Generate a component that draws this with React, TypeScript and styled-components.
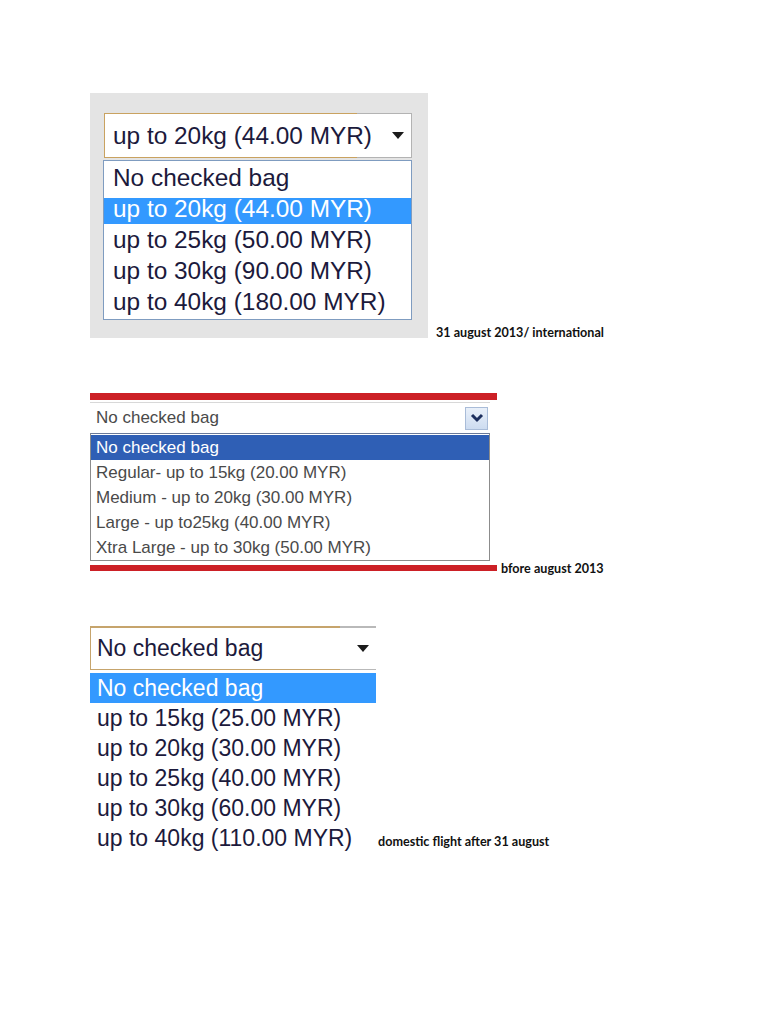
import React from "react";
import styled, { createGlobalStyle } from "styled-components";

const GlobalStyle = createGlobalStyle`
  html, body {
    margin: 0;
    padding: 0;
    background: #ffffff;
  }
`;

const intlOptions = [
  "No checked bag",
  "up to 20kg (44.00 MYR)",
  "up to 25kg (50.00 MYR)",
  "up to 30kg (90.00 MYR)",
  "up to 40kg (180.00 MYR)",
];

const oldOptions = [
  "No checked bag",
  "Regular- up to 15kg (20.00 MYR)",
  "Medium - up to 20kg (30.00 MYR)",
  "Large - up to25kg (40.00 MYR)",
  "Xtra Large - up to 30kg (50.00 MYR)",
];

const domesticOptions = [
  "No checked bag",
  "up to 15kg (25.00 MYR)",
  "up to 20kg (30.00 MYR)",
  "up to 25kg (40.00 MYR)",
  "up to 30kg (60.00 MYR)",
  "up to 40kg (110.00 MYR)",
];

const App = () => {
  return (
    <>
      <GlobalStyle />
      <Page>
        <Row>
          <GreyShot>
            <IntlSelect>
              <span>up to 20kg (44.00 MYR)</span>
              <Caret />
            </IntlSelect>
            <IntlList>
              {intlOptions.map((o, i) => (
                <IntlItem key={o} $active={i === 1}>
                  {o}
                </IntlItem>
              ))}
            </IntlList>
          </GreyShot>
          <Caption $gap={8} $drop={-2}>
            31 august 2013/ international
          </Caption>
        </Row>

        <Row>
          <RedShot>
            <OldSelect>
              <span>No checked bag</span>
              <OldButton>
                <svg width="14" height="10" viewBox="0 0 14 10">
                  <polyline
                    points="2,2 7,7 12,2"
                    fill="none"
                    stroke="#1d2f5e"
                    strokeWidth="3"
                  />
                </svg>
              </OldButton>
            </OldSelect>
            <OldList>
              {oldOptions.map((o, i) => (
                <OldItem key={o} $active={i === 0}>
                  {o}
                </OldItem>
              ))}
            </OldList>
          </RedShot>
          <Caption $gap={4} $drop={-5}>
            bfore august 2013
          </Caption>
        </Row>

        <Row>
          <PlainShot>
            <DomSelect>
              <span>No checked bag</span>
              <Caret $right={7} />
            </DomSelect>
            <DomList>
              {domesticOptions.map((o, i) => (
                <DomItem key={o} $active={i === 0}>
                  {o}
                </DomItem>
              ))}
            </DomList>
          </PlainShot>
          <Caption $gap={2} $drop={4}>
            domestic flight after 31 august
          </Caption>
        </Row>
      </Page>
    </>
  );
};

export default App;

const Page = styled.div`
  display: flex;
  flex-direction: column;
  gap: 55px;
  padding: 93px 0 0 90px;
  min-height: 1024px;
  box-sizing: border-box;
`;

const Row = styled.div`
  display: flex;
  align-items: flex-end;
`;

const Caption = styled.div<{ $gap: number; $drop: number }>`
  font-family: Lato, "Liberation Sans", sans-serif;
  font-weight: 700;
  font-size: 12.6px;
  line-height: 14px;
  color: #111;
  margin-left: ${(p) => p.$gap}px;
  margin-bottom: ${(p) => p.$drop}px;
  white-space: nowrap;
`;

const Caret = styled.i<{ $right?: number }>`
  display: block;
  width: 0;
  height: 0;
  border-left: 6px solid transparent;
  border-right: 6px solid transparent;
  border-top: 7px solid #1b1b1b;
  margin-right: ${(p) => p.$right ?? 7}px;
`;

/* first shot: grey framed screenshot */
const GreyShot = styled.div`
  width: 338px;
  height: 245px;
  box-sizing: border-box;
  background: #e4e4e4;
  padding: 20px 0 0 13px;
  display: flex;
  flex-direction: column;
  gap: 2px;
`;

const IntlSelect = styled.div`
  width: 308px;
  height: 45px;
  margin-left: 1px;
  box-sizing: border-box;
  background: #fff;
  border: 1px solid;
  border-image: linear-gradient(to right, #c9a260 82%, #b3b3b3 82%) 1;
  display: flex;
  align-items: center;
  justify-content: space-between;
  padding-left: 8px;
  font-family: "Liberation Sans", Arial, sans-serif;
  font-size: 24.4px;
  color: #1c1a3c;
`;

const IntlList = styled.div`
  width: 309px;
  height: 160px;
  box-sizing: border-box;
  background: #fff;
  border: 1px solid #7f9cc0;
  padding-top: 1px;
  display: flex;
  flex-direction: column;
`;

const IntlItem = styled.div<{ $active: boolean }>`
  height: 31px;
  line-height: 31px;
  padding-left: 9px;
  font-family: "Liberation Sans", Arial, sans-serif;
  font-size: 24.4px;
  color: ${(p) => (p.$active ? "#ffffff" : "#1c1a3c")};
  background: ${(p) =>
    p.$active ? "linear-gradient(transparent 5px, #3399ff 5px)" : "transparent"};
  white-space: nowrap;
`;

/* second shot: old style with red bars */
const RedShot = styled.div`
  width: 407px;
  box-sizing: border-box;
  border-top: 7px solid #cc2026;
  border-bottom: 6px solid #cc2026;
  padding: 2px 0 4px 0;
  display: flex;
  flex-direction: column;
`;

const OldSelect = styled.div`
  width: 400px;
  height: 31px;
  box-sizing: border-box;
  border-top: 1px solid #d8d8d8;
  display: flex;
  align-items: center;
  justify-content: space-between;
  padding-left: 6px;
  font-family: "Liberation Sans", Arial, sans-serif;
  font-size: 17px;
  color: #4a4a4a;
`;

const OldButton = styled.div`
  width: 23px;
  height: 23px;
  box-sizing: border-box;
  margin-right: 2px;
  background: linear-gradient(#e9f0fa, #cddcf0);
  border: 1px solid #a9bcd8;
  display: flex;
  align-items: center;
  justify-content: center;
`;

const OldList = styled.div`
  width: 400px;
  height: 128px;
  box-sizing: border-box;
  border: 1px solid #8c8c8c;
  border-top-color: #6a7a9a;
  padding-top: 1px;
  display: flex;
  flex-direction: column;
`;

const OldItem = styled.div<{ $active: boolean }>`
  height: 25.5px;
  line-height: 25px;
  padding-left: 5px;
  font-family: "Liberation Sans", Arial, sans-serif;
  font-size: 17px;
  color: ${(p) => (p.$active ? "#ffffff" : "#4a4a4a")};
  background: ${(p) => (p.$active ? "#2f5fb5" : "transparent")};
  white-space: nowrap;
`;

/* third shot: domestic, no frame */
const PlainShot = styled.div`
  width: 286px;
  display: flex;
  flex-direction: column;
  gap: 3px;
`;

const DomSelect = styled.div`
  width: 286px;
  height: 44px;
  box-sizing: border-box;
  border-style: solid;
  border-width: 2px 0 1px 1px;
  border-image: linear-gradient(to right, #c6a46c 87%, #b9b9b9 87%) 1;
  display: flex;
  align-items: center;
  justify-content: space-between;
  padding-left: 6px;
  font-family: "Liberation Sans", Arial, sans-serif;
  font-size: 23px;
  color: #1c1a3c;
`;

const DomList = styled.div`
  display: flex;
  flex-direction: column;
`;

const DomItem = styled.div<{ $active: boolean }>`
  height: 30px;
  line-height: 30px;
  padding-left: 7px;
  font-family: "Liberation Sans", Arial, sans-serif;
  font-size: 23px;
  color: ${(p) => (p.$active ? "#ffffff" : "#1c1a3c")};
  background: ${(p) => (p.$active ? "#3399ff" : "transparent")};
  white-space: nowrap;
`;
